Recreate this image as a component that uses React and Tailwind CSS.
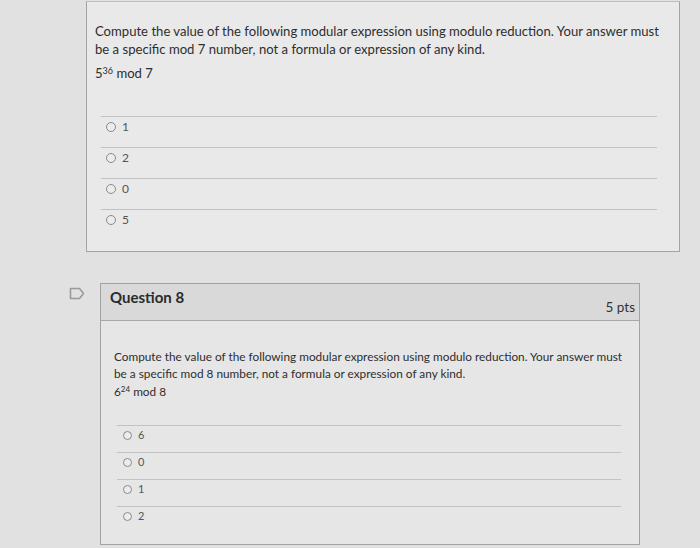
const QUESTIONS = {
  q7: {
    text: 'Compute the value of the following modular expression using modulo reduction. Your answer must be a specific mod 7 number, not a formula or expression of any kind.',
    base: '5',
    exp: '36',
    mod: 'mod 7',
    options: ['1', '2', '0', '5'],
  },
  q8: {
    text: 'Compute the value of the following modular expression using modulo reduction. Your answer must be a specific mod 8 number, not a formula or expression of any kind.',
    base: '6',
    exp: '24',
    mod: 'mod 8',
    options: ['6', '0', '1', '2'],
  },
};

function FlagIcon() {
  return (
    <svg width="16" height="13" viewBox="0 0 16 13" fill="none">
      <path
        d="M1.5 1.5 H10.5 L14.5 6.5 L10.5 11.5 H1.5 Z"
        stroke="#9a9a9a"
        strokeWidth="1.6"
        strokeLinejoin="round"
      />
    </svg>
  );
}

function Radio({ size }) {
  return (
    <span
      className={`${size} rounded-full border border-[#8a8a8a] bg-[#ececec] flex-shrink-0`}
    />
  );
}

export default function App() {
  const q7 = QUESTIONS.q7;
  const q8 = QUESTIONS.q8;

  return (
    <div className="w-[700px] h-[548px] overflow-hidden bg-[#e1e1e1] pt-[1px] font-['Lato','Open_Sans',sans-serif] text-[#2e2e2e]">
      {/* Question 7 body (header scrolled off) */}
      <section className="ml-[86px] w-[594px] h-[251px] border border-[#a3a3a3] border-t-[#bdbdbd] bg-[#e9e9e9] pt-[20px] pl-2">
        <p className="w-[572px] text-[13.1px] leading-[18px]">{q7.text}</p>
        <p className="mt-[6px] text-[13.1px] leading-[18px]">
          {q7.base}
          <sup className="text-[9px]">{q7.exp}</sup> {q7.mod}
        </p>

        <div className="mt-[34px] ml-[6px] mr-[22px]">
          {q7.options.map((opt) => (
            <div
              key={opt}
              className="h-[31px] border-t border-[#c2c2c2] pt-[3px] pl-[5px] flex items-start"
            >
              <div className="flex items-center gap-[6px] h-[14px]">
                <Radio size="w-[10px] h-[10px]" />
                <span className="text-[12px] leading-[14px] text-[#555]">{opt}</span>
              </div>
            </div>
          ))}
        </div>
      </section>

      {/* Question 8 */}
      <div className="mt-[31px] flex items-start">
        <div className="ml-[69px] mt-[4px]">
          <FlagIcon />
        </div>
        <section className="ml-[15px] w-[540px] h-[262px] border border-[#a3a3a3] bg-[#e6e6e6]">
          <header className="h-[37px] bg-[#d9d9d9] border-b border-[#a8a8a8] flex justify-between pl-[9px] pr-[4px]">
            <h2 className="pt-[3px] text-[15px] leading-[20px] font-bold text-[#2b2b2b]">
              Question 8
            </h2>
            <span className="pt-[14px] text-[13.5px] leading-[18px] text-[#333]">5 pts</span>
          </header>

          <div className="pt-[27px] pl-[13px]">
            <p className="w-[512px] text-[11.8px] leading-[17px]">{q8.text}</p>
            <p className="mt-[1px] text-[11.8px] leading-[17px]">
              {q8.base}
              <sup className="text-[8px]">{q8.exp}</sup> {q8.mod}
            </p>

            <div className="mt-[25px] ml-[3px] mr-[18px]">
              {q8.options.map((opt) => (
                <div
                  key={opt}
                  className="h-[27px] border-t border-[#c2c2c2] pt-[2px] pl-[6px] flex items-start"
                >
                  <div className="flex items-center gap-[6px] h-[14px]">
                    <Radio size="w-[9px] h-[9px]" />
                    <span className="text-[11px] leading-[14px] text-[#555]">{opt}</span>
                  </div>
                </div>
              ))}
            </div>
          </div>
        </section>
      </div>
    </div>
  );
}
